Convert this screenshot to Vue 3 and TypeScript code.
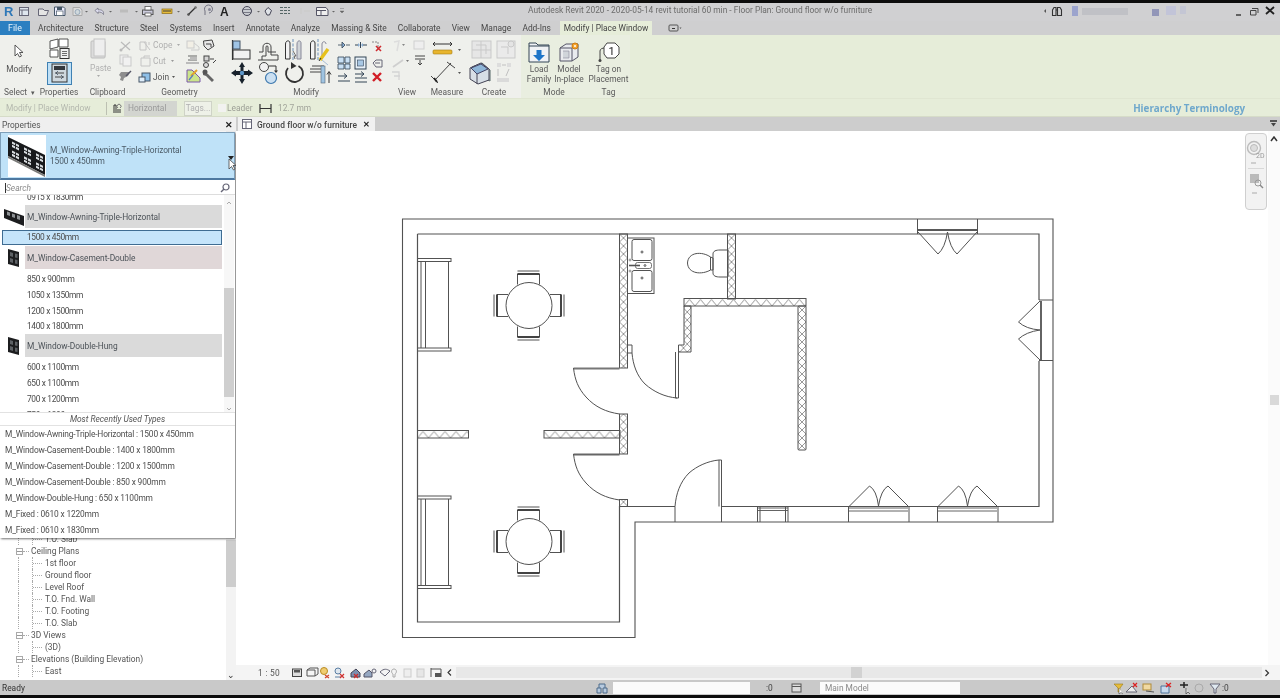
<script setup lang="ts">
interface TypeRow { kind: 'row' | 'group' | 'sel'; text: string; thumb?: string; tone?: string }

const tabs: string[] = ['Architecture', 'Structure', 'Steel', 'Systems', 'Insert', 'Annotate', 'Analyze', 'Massing & Site', 'Collaborate', 'View', 'Manage', 'Add-Ins']

const typeRows: TypeRow[] = [
  { kind: 'row', text: '0915 x 1830mm' },
  { kind: 'group', text: 'M_Window-Awning-Triple-Horizontal', thumb: 'wide' },
  { kind: 'sel', text: '1500 x 450mm' },
  { kind: 'group', text: 'M_Window-Casement-Double', thumb: 'tall', tone: 'pink' },
  { kind: 'row', text: '850 x 900mm' },
  { kind: 'row', text: '1050 x 1350mm' },
  { kind: 'row', text: '1200 x 1500mm' },
  { kind: 'row', text: '1400 x 1800mm' },
  { kind: 'group', text: 'M_Window-Double-Hung', thumb: 'tall' },
  { kind: 'row', text: '600 x 1100mm' },
  { kind: 'row', text: '650 x 1100mm' },
  { kind: 'row', text: '700 x 1200mm' },
  { kind: 'row', text: '750 x 1300mm' },
]

const recent: string[] = [
  'M_Window-Awning-Triple-Horizontal : 1500 x 450mm',
  'M_Window-Casement-Double : 1400 x 1800mm',
  'M_Window-Casement-Double : 1200 x 1500mm',
  'M_Window-Casement-Double : 850 x 900mm',
  'M_Window-Double-Hung : 650 x 1100mm',
  'M_Fixed : 0610 x 1220mm',
  'M_Fixed : 0610 x 1830mm',
]

const tree: { text: string; group: boolean }[] = [
  { text: 'Ceiling Plans', group: true },
  { text: '1st floor', group: false },
  { text: 'Ground floor', group: false },
  { text: 'Level Roof', group: false },
  { text: 'T.O. Fnd. Wall', group: false },
  { text: 'T.O. Footing', group: false },
  { text: 'T.O. Slab', group: false },
  { text: '3D Views', group: true },
  { text: '(3D)', group: false },
  { text: 'Elevations (Building Elevation)', group: true },
  { text: 'East', group: false },
]

const tableRows: number[] = [305.5, 541.5]
const sideWindows: number[] = [258, 495.5]
const bottomWindows: number[] = [0, 89]
const panes: number[][] = [[1, 1], [13, 1], [25, 1], [1, 10], [13, 10], [25, 10]]
</script>

<template>
  <div class="app">
    <div class="blackbar"></div>

    <header class="titlebar">
      <svg class="qat" viewBox="0 3 350 18" width="350" height="18">
        <text x="4" y="16" class="rlogo">R</text>
        <rect x="19.5" y="7.5" width="9" height="8" fill="#dfe6ee" stroke="#667"/><path d="M19.5 10H28.5M22 10V15.5" stroke="#667" fill="none"/>
        <path d="M38.5 9H43L44.5 10.5H48.5L46.5 15.5H38.5Z" fill="#e4e4e4" stroke="#667"/>
        <path d="M54.5 7H63.5L65 8.500V15.500H54.500Z" fill="#eef" stroke="#456"/><rect x="57" y="7" width="5" height="3" fill="#456"/><rect x="56.500" y="11" width="6.500" height="4.500" fill="#fff" stroke="#456" stroke-width=".7"/>
        <path d="M73 7.500H80L82 10V15.500H73Z" fill="#ddd" stroke="#aaa"/><circle cx="77.500" cy="12" r="2.500" fill="#cfd8dc" stroke="#9ab"/>
        <path d="M85 11H88L86.500 12.500Z" fill="#666"/>
        <path d="M95 10.500L98 8V9.800C102 9.500 104 11 103.500 14.500C102.500 12.500 100.500 12 98 12V13.500Z" fill="#dde" stroke="#667" stroke-width=".7"/>
        <path d="M109 11H112L110.500 12.500Z" fill="#666"/>
        <path d="M120 11H128" stroke="#bcbcbc" stroke-width="3"/><path d="M135 11H138L136.500 12.500Z" fill="#666"/>
        <rect x="142.500" y="10" width="10.500" height="4.500" fill="#ccd" stroke="#555"/><rect x="145" y="6.500" width="6" height="3.500" fill="#fff" stroke="#555" stroke-width=".8"/><rect x="145" y="13" width="6" height="3" fill="#fff" stroke="#555" stroke-width=".8"/>
        <rect x="162" y="9" width="10" height="4.500" fill="#e8bd3a" stroke="#8a6a12" stroke-width=".7"/><path d="M163 11H171" stroke="#3b3b3b"/>
        <path d="M177 11H180L178.500 12.500Z" fill="#666"/>
        <path d="M188 15L196 7" stroke="#333" stroke-width="1.200"/><circle cx="188.500" cy="14.500" r="1.300" fill="#555"/><circle cx="195.500" cy="7.500" r="1.300" fill="#777"/>
        <path d="M205 15V11M205 11A4 4 0 1 1 209 13" fill="none" stroke="#667" stroke-width=".9"/><circle cx="209.500" cy="9.500" r="1.500" fill="#889"/>
        <text x="220" y="15.500" class="qa">A</text>
        <circle cx="247" cy="11" r="4.500" fill="#c9ccd1" stroke="#445"/><path d="M243 9.500H251M243 12.500H251" stroke="#445" stroke-width=".6"/>
        <path d="M257 11H260L258.500 12.500Z" fill="#666"/>
        <path d="M265 11L268 7.500L271.500 10.500L269.500 15H267Z" fill="#dfe3e8" stroke="#445"/>
        <path d="M280 7.500H290M280 10.500H290M280 13.500H290" stroke="#566" stroke-width="1.200" stroke-dasharray="3 1"/>
        <path d="M301 8V14M304 11H310" stroke="#ccc" stroke-width="1.600"/>
        <path d="M316.500 7.500H326L328 10V15.500H316.500Z" fill="#eee" stroke="#556"/><path d="M316.500 10.500H326M321 10.500V15.500" stroke="#556"/>
        <path d="M332 11H335L333.500 12.500Z" fill="#666"/>
        <path d="M340 8.500H344M340 11H344L342 13Z" fill="#666" stroke="#666" stroke-width=".4"/>
      </svg>
      <div class="title">Autodesk Revit 2020 - 2020-05-14 revit tutorial 60 min - Floor Plan: Ground floor w/o furniture</div>
      <div class="title-right">
        <svg viewBox="1040 3 150 18" width="150" height="18">
          <path d="M1046 9V13L1044 11Z" fill="#555"/>
          <path d="M1052.500 15.500V10L1054 7.500H1056V15.500ZM1057.500 15.500V7.500H1060L1061.500 10V15.500Z" fill="none" stroke="#333" stroke-width="1.100"/><path d="M1056 10H1057.500" stroke="#333"/>
          <rect x="1072" y="6" width="6" height="10" fill="#8f98cc" opacity=".8"/>
          <rect x="1082" y="8" width="46" height="7" fill="#c0c1c6"/>
          <rect x="1152" y="9" width="7" height="7" fill="#9296b8"/>
          <rect x="1166" y="6" width="10" height="9" fill="#c2c4d8"/>
          <rect x="1180" y="6" width="6" height="8" fill="#c4c6d4"/>
        </svg>
        <div class="win-btns">
          <svg viewBox="0 0 47 12" width="47" height="12">
            <path d="M3 10H8" stroke="#333" stroke-width="1.400"/>
            <path d="M19 3.500H25V8M17.500 5.500H23V10H17.500Z" fill="none" stroke="#444" stroke-width="1"/>
            <path d="M33 2L41 9M41 2L33 9" stroke="#222" stroke-width="1.800"/>
          </svg>
        </div>
      </div>
    </header>

    <nav class="tabs">
      <div class="file-tab">File</div>
      <div v-for="t in tabs" :key="t" class="tab">{{ t }}</div>
      <div class="tab active">Modify | Place Window</div>
      <svg class="tab-extra" viewBox="0 0 14 8" width="14" height="8">
        <rect x="1" y="1" width="9" height="6" rx="1" fill="none" stroke="#555"/><path d="M4 4.500H7" stroke="#333"/><path d="M11.500 3.500H13.500L12.500 5Z" fill="#555"/>
      </svg>
    </nav>

    <section class="ribbon">
      <div class="panel" style="width:38px">
        <div class="panel-body col-center">
          <svg viewBox="0 0 16 14" width="16" height="14" class="sel-cursor"><path d="M4 1V12L6.500 9.500L8.500 13L10.500 12L8.500 8.500H12Z" fill="#fff" stroke="#444" stroke-width=".9"/></svg>
          <span class="tool-label lift">Modify</span>
        </div>
        <div class="panel-title left">Select <span class="caret">▾</span></div>
      </div>

      <div class="panel" style="width:46px">
        <div class="panel-body">
          <svg viewBox="38 35 46 50" width="46" height="50">
            <path d="M50 41L58 39V47L50 49ZM59 39H68V47H59ZM50 50H58V57H50Z" fill="#fff" stroke="#444" stroke-width=".9"/>
            <rect x="60" y="48.500" width="9" height="10" fill="#f0f0f0" stroke="#333"/><path d="M62 51.500H67M62 53.500H67M62 55.500H67" stroke="#333" stroke-width=".7"/>
            <rect x="47.500" y="62.500" width="24" height="22" fill="#bfe0f6" stroke="#3f81b3"/>
            <rect x="52" y="64" width="15" height="18" fill="#cfd8de" stroke="#333"/><rect x="54" y="66" width="11" height="4" fill="#33383d"/>
            <path d="M55 73H64M55 77H64" stroke="#444"/><path d="M58 71L56 73L58 75M61 75L63 77L61 79" stroke="#345" fill="none" stroke-width=".7"/>
          </svg>
        </div>
        <div class="panel-title nudge-l">Properties</div>
      </div>

      <div class="panel" style="width:53px">
        <div class="panel-body">
          <svg viewBox="84 35 53 50" width="53" height="50">
            <rect x="91" y="41" width="14" height="17" rx="1" fill="#dcdcdc" stroke="#bdbdbd"/><rect x="94" y="39" width="11" height="17" fill="#eee" stroke="#c4c4c4"/>
            <text x="90" y="71" class="rt grey">Paste</text><path d="M97 75H100L98.500 77Z" fill="#aaa"/>
            <path d="M121 42L130 50M130 42L121 50" stroke="#bbb" stroke-width="1.200"/><circle cx="121" cy="50" r="1.500" fill="#bbb"/>
            <rect x="120" y="55" width="8" height="9" fill="#eee" stroke="#c9c9c9"/><rect x="123" y="57" width="8" height="9" fill="#f1f1f1" stroke="#c9c9c9"/>
            <path d="M121 72H130L128 76L124 78L123 81L120 80L121 77L119 75Z" fill="#8e8e8e"/><path d="M131 71L126 76" stroke="#556" stroke-width="1.400"/>
          </svg>
        </div>
        <div class="panel-title nudge-l2">Clipboard</div>
      </div>

      <div class="panel" style="width:85px">
        <div class="panel-body">
          <svg viewBox="137 35 85 50" width="85" height="50">
            <path d="M140 42H146V50H140ZM144 42L150 50M149 42V45" fill="none" stroke="#c4c4c4"/>
            <text x="153" y="48" class="rt grey">Cope</text><path d="M177 44H180L178.500 46Z" fill="#aaa"/>
            <path d="M141 58H150V66H141ZM144 58V56H150" fill="none" stroke="#c4c4c4"/>
            <text x="153" y="64" class="rt grey">Cut</text><path d="M171 60H174L172.500 62Z" fill="#999"/>
            <rect x="142" y="73" width="8" height="8" fill="#8ec0e8" stroke="#456"/><rect x="139" y="77" width="6" height="5" fill="#dfeefa" stroke="#456"/>
            <text x="153" y="80" class="rt">Join</text><path d="M172 76H175L173.500 78Z" fill="#555"/>
            <rect x="187" y="41" width="7" height="7" fill="#f2efe6" stroke="#ccc"/><path d="M194 43L199 47V50L191 50" fill="none" stroke="#ccc"/>
            <path d="M203.500 41L212 40L214 46L208 50L204 46Z" fill="#e8e8e8" stroke="#444"/><path d="M206 44L211 44V47" stroke="#444" fill="none"/>
            <path d="M188 56H197M188 60H197" stroke="#666" stroke-width="1.200"/><rect x="190" y="57" width="7" height="3" fill="#bbb"/><rect x="186" y="62" width="13" height="2" fill="#bbb"/>
            <rect x="204" y="56" width="5" height="5" fill="#d5d5d5" stroke="#444"/><circle cx="206" cy="65" r="2.500" fill="#ddd" stroke="#444"/><path d="M210 59H214M213 63L216 60" stroke="#444"/>
            <path d="M187 70V82H200V78L192 70Z" fill="#cbe58c" stroke="#7b58a8"/><path d="M191 76L197 70" stroke="#e2a22a" stroke-width="2"/><path d="M189 80L193 75" stroke="#5c7bc0" stroke-width="1.300"/>
            <path d="M203 71L208 74L214 80L212 82L206 76L203 75Z" fill="#666"/><circle cx="205" cy="72" r="2.500" fill="#555"/>
          </svg>
        </div>
        <div class="panel-title">Geometry</div>
      </div>

      <div class="panel" style="width:168px">
        <div class="panel-body">
          <svg viewBox="222 35 168 50" width="168" height="50">
            <path d="M232.500 40V60" stroke="#333" stroke-width="1.200"/><rect x="233" y="41" width="7" height="8" fill="#9fc4e6" stroke="#456"/><rect x="233" y="50" width="17" height="9" fill="#f1f1f1" stroke="#333"/>
            <path d="M258 60H278V55H271V47C271 42 263 42 263 47V52H259M262 60V56H266V47C266 45.500 268 45.500 268 47V52H276" fill="none" stroke="#444"/>
            <path d="M285.500 59V44C285.500 40 290 40 290 43V59Z" fill="#f2f2f2" stroke="#333"/><path d="M293 39V61" stroke="#6a8fb8" stroke-dasharray="3 1.500"/><path d="M297 59V44C297 40 301 40 301 43V59Z" fill="#d0d4d8" stroke="#889"/><path d="M293 51L296 56L294 56L295 59" fill="#fff" stroke="#333" stroke-width=".7"/>
            <path d="M310.500 59V44C310.500 40 315 40 315 43V59Z" fill="#f2f2f2" stroke="#333"/><path d="M318 39V60" stroke="#6a8fb8" stroke-dasharray="3 1.500"/><path d="M322 59V44C322 41 326 41 326 44" fill="none" stroke="#889"/><path d="M320 60L328 49" stroke="#e6c11c" stroke-width="3.400"/><path d="M319 61L321 58" stroke="#333"/>
            <path d="M338 45H342M346 45H350M342 42L345 45L342 48Z" fill="#8ab0d8" stroke="#345" stroke-width=".8"/>
            <path d="M355 45H358.500M362.500 45H367M360.500 42V48" fill="none" stroke="#345"/><path d="M358 43L360 45L358 47ZM363 43L361 45L363 47Z" fill="#8ab0d8"/>
            <path d="M372 42H378V49" fill="none" stroke="#888" stroke-dasharray="2 1"/><path d="M376 46L381 51M381 46L376 51" stroke="#d02b30" stroke-width="1.600"/>
            <path d="M338 57H344V63H338ZM345 57H350V63H345ZM338 64H344V69H338ZM345 64H350V69H345Z" fill="#c9e0f4" stroke="#345" stroke-width=".8"/>
            <rect x="355" y="57" width="11" height="12" fill="#e6f0f8" stroke="#345"/><rect x="357.500" y="60" width="6" height="6" fill="#a8c8e4" stroke="#345" stroke-width=".6"/>
            <path d="M373 63L376 60H382V67H376Z" fill="none" stroke="#667"/><path d="M375 63H380" stroke="#667"/>
            <path d="M338 76H347M344 73.500L347 76L344 78.500M338 81H350" fill="none" stroke="#345"/>
            <path d="M355 74H364M361 71.500L364 74L361 76.500M355 78H367M355 82H367" fill="none" stroke="#345"/>
            <path d="M373 73L381 81M381 73L373 81" stroke="#d21e26" stroke-width="2.400"/>
            <path d="M242 62L245 67H243.500V71H248V69.500L253 73L248 76.500V75H243.500V79H245L242 84L239 79H240.500V75H236V76.500L231 73L236 69.500V71H240.500V67H239Z" fill="#18222c"/><circle cx="242" cy="73" r="2.200" fill="#5d97c9"/>
            <circle cx="264" cy="67" r="4.500" fill="#f1f1f1" stroke="#444"/><circle cx="271" cy="78" r="5.500" fill="#cbe0f2" stroke="#3d78ae" stroke-width="1.200"/><path d="M269 66H276V72" fill="none" stroke="#333"/><path d="M274 70.500L276 73L278 70.500Z" fill="#333"/>
            <path d="M298.500 66A8.500 8.500 0 1 1 288 68" fill="none" stroke="#333" stroke-width="1.800"/><path d="M291 62L296.500 66L291 69Z" fill="#333"/>
            <path d="M310 69H325M310 72H322M312 66H324" stroke="#444"/><path d="M322 60L328 65" stroke="#a5bcd4"/><rect x="321" y="66" width="4" height="17" fill="#9fc4e2" stroke="#567" stroke-width=".6"/><path d="M329 83V72M327 74.500L329 71.500L331 74.500" fill="none" stroke="#333"/>
          </svg>
        </div>
        <div class="panel-title">Modify</div>
      </div>

      <div class="panel" style="width:37px">
        <div class="panel-body">
          <svg viewBox="390 35 37 50" width="37" height="50">
            <path d="M394 42L399 41L397 51" fill="none" stroke="#ddd" stroke-width="1.500"/><path d="M402 44H405L403.500 46Z" fill="#888"/>
            <rect x="414" y="41" width="10" height="8" fill="#eee" stroke="#d0d0d0"/>
            <path d="M393 67L403 60" stroke="#cfcfcf" stroke-width="1.800"/><path d="M406 60H409L407.500 62Z" fill="#777"/>
            <path d="M415 56H425M415 59H425" stroke="#444"/><path d="M420 60V65M418 63L420 65L422 63" fill="none" stroke="#444"/>
            <path d="M392 72L399 72V80M394 76H400" stroke="#d4d4d4" fill="none" stroke-width="1.300"/>
          </svg>
        </div>
        <div class="panel-title nudge-l3">View</div>
      </div>

      <div class="panel" style="width:40px">
        <div class="panel-body">
          <svg viewBox="427 35 40 50" width="40" height="50">
            <path d="M433 44H452M435 42L433 44L435 46M450 42L452 44L450 46" stroke="#333" fill="none"/><rect x="433" y="50" width="19" height="4" rx="1" fill="#e8b52e" stroke="#a67e13" stroke-width=".6"/>
            <path d="M458 49H461L459.500 51Z" fill="#555"/>
            <path d="M435 80L451 63" stroke="#444"/><path d="M431 76L438 83M447 62L455 68" stroke="#444"/><path d="M434 78L437 82" stroke="#222" stroke-width="2"/>
            <path d="M458 72H461L459.500 74Z" fill="#555"/>
          </svg>
        </div>
        <div class="panel-title">Measure</div>
      </div>

      <div class="panel" style="width:54px">
        <div class="panel-body">
          <svg viewBox="467 35 54 50" width="54" height="50">
            <rect x="472" y="41" width="19" height="17" fill="#e6e6e6" stroke="#c9c9c9"/><path d="M481 41V58M472 50H491M476 45H486V54" fill="none" stroke="#c9c9c9"/>
            <rect x="497" y="41" width="18" height="17" fill="#eaeaea" stroke="#c9c9c9"/><circle cx="511" cy="44" r="3" fill="#e4e4e4" stroke="#c9c9c9"/><path d="M501 47H508V54" fill="none" stroke="#c9c9c9"/>
            <path d="M472 67L482 63L490 70V81L482 77L472 71Z" fill="#e8e8e8" stroke="#566"/>
            <path d="M470 68L481 63L489 69V80L478 84L470 79Z" fill="#d8dfe6" stroke="#445"/>
            <path d="M471 68L481 64L488 69L477 74Z" fill="#8fb6d8" stroke="#446"/>
            <path d="M477 74V84" stroke="#445"/>
            <rect x="497" y="63" width="4" height="4" fill="#ddd"/><rect x="507" y="63" width="4" height="4" fill="#ddd"/><path d="M502 65H506M498 69V76M509 69L506 76" stroke="#c0c0c0"/><rect x="497" y="78" width="12" height="4" fill="#dadada"/>
          </svg>
        </div>
        <div class="panel-title">Create</div>
      </div>

      <div class="panel light" style="width:66px">
        <div class="panel-body tool-row">
          <div class="big-tool">
            <svg viewBox="0 0 22 22" width="22" height="22">
              <path d="M1 2H8L10 4H21V21H1Z" fill="#f0f2f5" stroke="#345" stroke-width="1"/><path d="M1 5H21" stroke="#345" stroke-width="1"/>
              <path d="M8.500 9H13.500V14H17L11 20L5 14H8.500Z" fill="#1d74c8"/>
            </svg>
            <span>Load<br>Family</span>
          </div>
          <div class="big-tool">
            <svg viewBox="0 0 22 22" width="22" height="22">
              <path d="M2 7L8 3H20L20 16L14 20H2Z" fill="#e9ebee" stroke="#556"/><path d="M2 7H14V20M14 7L20 3" stroke="#556" fill="none"/><path d="M5 10H11V17H5" fill="#d0d5da" stroke="#889" stroke-width=".6"/>
              <circle cx="17" cy="5" r="3" fill="#f3a532" stroke="#d17d10"/><circle cx="17" cy="5" r="1" fill="#fff"/>
            </svg>
            <span>Model<br>In-place</span>
          </div>
        </div>
        <div class="panel-title">Mode</div>
      </div>

      <div class="panel light" style="width:43px">
        <div class="panel-body tool-row">
          <div class="big-tool">
            <svg viewBox="0 0 24 22" width="24" height="22">
              <path d="M3 19V10C3 8 5 7 8 7" fill="none" stroke="#444"/><circle cx="3" cy="19.500" r="1.500" fill="#444"/>
              <path d="M10 2H18L22 6V13L18 17H10L7 13V6Z" fill="#fff" stroke="#444"/><text x="14.500" y="13.500" class="tagnum">1</text>
            </svg>
            <span>Tag on<br>Placement</span>
          </div>
        </div>
        <div class="panel-title">Tag</div>
      </div>
      <div class="ribbon-fill"></div>
    </section>

    <section class="options">
      <span class="opt-mode">Modify | Place Window</span>
      <span class="opt-sep"></span>
      <svg viewBox="0 0 10 10" width="10" height="10" class="opt-ico"><path d="M1 9H9M1 7H9" stroke="#333"/><path d="M2 6L2 2H4V6" fill="none" stroke="#333"/><path d="M6 5A2 2 0 1 1 8 5" fill="none" stroke="#777"/></svg>
      <span class="opt-select">Horizontal</span>
      <span class="opt-btn">Tags...</span>
      <span class="opt-check"></span>
      <span class="opt-leader">Leader</span>
      <svg viewBox="0 0 13 9" width="13" height="9" class="opt-dim"><path d="M1 0V9M12 0V9M1 4.500H12" stroke="#333" stroke-width="1.200"/></svg>
      <span class="opt-value">12.7 mm</span>
      <span class="hierarchy">Hierarchy Terminology</span>
    </section>

    <main class="workspace">
      <aside class="side">
        <div class="side-head"><span>Properties</span><span class="close">✕</span></div>
        <div class="side-main">
          <div class="tree">
            <div class="tree-rows">
              <div class="tree-row"><span class="g1"></span><span class="g2"></span><span class="dash"></span>T.O. Slab</div>
              <div v-for="r in tree" :key="r.text" class="tree-row">
                <template v-if="r.group">
                  <span class="box"></span><span class="dash short"></span>{{ r.text }}
                </template>
                <template v-else>
                  <span class="g1"></span><span class="g2"></span><span class="dash"></span>{{ r.text }}
                </template>
              </div>
            </div>
            <div class="tree-scroll"><div class="tree-thumb"></div><span class="tree-arrow">⌄</span></div>
          </div>

          <div class="dropdown">
            <div class="selector">
              <div class="sel-thumb">
                <svg viewBox="0 0 38 42" width="38" height="42">
                  <path d="M0 2L37 20V40L0 21Z" fill="#18191b"/>
                  <path d="M0 21L37 40V42L0 23Z" fill="#7a7a78"/>
                  <g transform="matrix(1 .49 0 1 3 5)">
                    <rect v-for="(p, i) in panes" :key="i" :x="p[0]" :y="p[1]" width="7" height="5.500" fill="#d9dde0"/>
                    <path d="M4.500 1V6.500M16.500 1V6.500M28.500 1V6.500M1 3.800H32M4.500 10V15.500M16.500 10V15.500M28.500 10V15.500M1 12.800H32" stroke="#18191b" stroke-width=".9"/>
                  </g>
                </svg>
              </div>
              <div class="sel-text">M_Window-Awning-Triple-Horizontal<br>1500 x 450mm</div>
              <svg class="sel-arrow" viewBox="0 0 10 16" width="10" height="16"><path d="M1 1H7L4 5Z" fill="#222"/><path d="M2 4V14L4.500 11.500L6.500 15L8 14L6 10.500H9Z" fill="#fff" stroke="#444" stroke-width=".8"/></svg>
            </div>
            <div class="search">
              <span class="search-text">Search</span>
              <svg viewBox="0 0 10 10" width="10" height="10"><circle cx="6" cy="4" r="3" fill="none" stroke="#667" stroke-width="1.200"/><path d="M4 6L1 9" stroke="#667" stroke-width="1.500"/></svg>
            </div>
            <div class="list-wrap">
              <div class="list">
                <div class="list-inner">
                  <template v-for="r in typeRows" :key="r.text">
                    <div v-if="r.kind === 'group'" class="group-row">
                      <div class="thumb">
                        <svg v-if="r.thumb === 'wide'" viewBox="0 0 20 20" width="20" height="20">
                          <path d="M0 3L20 10V20L0 12Z" fill="#1c1d1f"/>
                          <path d="M3 5.500L6 6.500V10L3 9ZM8 7.500L11 8.500V12L8 11ZM13 9L16 10V14L13 13Z" fill="#8d9194"/>
                        </svg>
                        <svg v-else viewBox="0 0 20 20" width="20" height="20">
                          <path d="M4 2L15 5V20L4 17Z" fill="#1c1d1f"/>
                          <path d="M6 5L9 6V10L6 9ZM11 6.500L13.500 7V11L11 10.500ZM6 11L9 12V16L6 15ZM11 12.500L13.500 13V17L11 16.500Z" fill="#5e6266"/>
                        </svg>
                      </div>
                      <div class="group-label" :class="r.tone">{{ r.text }}</div>
                    </div>
                    <div v-else class="type-row" :class="{ selected: r.kind === 'sel' }">{{ r.text }}</div>
                  </template>
                </div>
              </div>
              <div class="list-scroll">
                <svg class="list-up" viewBox="0 0 10 93" width="10" height="93"><path d="M3 9L5 7L7 9" fill="none" stroke="#aaa"/></svg>
                <div class="list-thumb"></div>
                <svg class="list-down" viewBox="0 0 10 15" width="10" height="15"><path d="M3 11L5 13L7 11" fill="none" stroke="#aaa"/></svg>
              </div>
            </div>
            <div class="mru-head">Most Recently Used Types</div>
            <div class="mru">
              <div v-for="m in recent" :key="m" class="mru-row">{{ m }}</div>
            </div>
          </div>
        </div>
      </aside>

      <div class="view">
        <div class="doc-bar">
          <div class="doc-tab">
            <svg viewBox="0 0 10 10" width="10" height="10"><rect x=".5" y=".5" width="9" height="9" fill="#fff" stroke="#667"/><path d="M.5 3H9.500M4 3V9.500" stroke="#667"/></svg>
            <span class="doc-name">Ground floor w/o furniture</span>
            <span class="doc-close">✕</span>
          </div>
          <svg class="doc-more" viewBox="0 0 8 8" width="8" height="8"><rect x="0" y="0" width="7" height="2" fill="#555"/><path d="M1 3H6L3.500 6.500Z" fill="#444"/></svg>
        </div>

        <div class="canvas">
          <svg class="plan" viewBox="236 131 1032 534" width="1032" height="534">
            <defs>
              <pattern id="xh" patternUnits="userSpaceOnUse" x="619.500" y="234" width="8" height="8">
                <path d="M0 0L8 8M8 0L0 8" stroke="#6f6f6f" stroke-width=".7"/>
              </pattern>
              <pattern id="xh2" patternUnits="userSpaceOnUse" x="798" y="306" width="8" height="8">
                <path d="M0 0L8 8M8 0L0 8" stroke="#6f6f6f" stroke-width=".7"/>
              </pattern>
              <pattern id="xh3" patternUnits="userSpaceOnUse" x="727.500" y="234" width="8" height="8">
                <path d="M0 0L8 8M8 0L0 8" stroke="#6f6f6f" stroke-width=".7"/>
              </pattern>
              <pattern id="xh4" patternUnits="userSpaceOnUse" x="683.500" y="300" width="7.500" height="8">
                <path d="M0 0L7.500 8M7.500 0L0 8" stroke="#6f6f6f" stroke-width=".7"/>
              </pattern>
              <pattern id="zig" patternUnits="userSpaceOnUse" x="417.500" y="430.500" width="11" height="7.500">
                <path d="M0 7.500L5.500 1L11 7.500" fill="none" stroke="#6f6f6f" stroke-width=".7"/>
              </pattern>
              <pattern id="zig2" patternUnits="userSpaceOnUse" x="684" y="298.500" width="11" height="7.500">
                <path d="M0 7.500L5.500 1L11 7.500" fill="none" stroke="#6f6f6f" stroke-width=".7"/>
              </pattern>
            </defs>

            <g fill="none" stroke="#525252" stroke-width="1">
              <path d="M402.500 219H1053V522H635V637.500H402.500Z" stroke-width="1.100"/>
              <path d="M417.500 234H1039V300M1039 361V506.500H721.500M675 506.500H619.500V622H417.500V234" stroke-width="1.200"/>

              <rect x="619.500" y="234" width="8" height="134" fill="url(#xh)"/>
              <path d="M627.500 345H632V353H627.500Z" fill="#fff"/>
              <rect x="727.500" y="234" width="8" height="65" fill="url(#xh3)"/>
              <rect x="684" y="298.500" width="122" height="7.500" fill="url(#zig2)"/>
              <path d="M684 306V345H678.500V352H691V306Z" fill="url(#xh4)"/>
              <rect x="798" y="306" width="8" height="144" rx="1" fill="url(#xh2)"/>
              <rect x="417.500" y="430.500" width="51" height="7.500" fill="url(#zig)"/>
              <rect x="544" y="430.500" width="76" height="7.500" fill="url(#zig)"/>
              <rect x="619.500" y="414" width="8" height="40" fill="url(#xh)"/>
              <rect x="619.500" y="499.500" width="8" height="7" fill="url(#xh)"/>

              <path d="M573.500 368.500H619.500" stroke-width="2" stroke="#777"/>
              <path d="M573.500 368C575 380 578 388 586 397C595 407 606 412 619.500 414"/>
              <path d="M573.500 454.500H619.500" stroke-width="2" stroke="#666"/>
              <path d="M573.500 454C575 466 578 474 586 483C595 493 606 498 619.500 500"/>
              <path d="M675.500 352V398M678.500 352V398M675.500 398H678.500"/>
              <path d="M677 398C665 397 654 392 645 384C637 376 633 365 632 353"/>
              <path d="M719 460V506.500M721.500 460V522M719 460H721.500"/>
              <path d="M719 460C708 461 697 466 689 473C680 482 676 494 675 506.500V522"/>

              <rect x="627.500" y="238" width="26.500" height="55.500"/>
              <rect x="632" y="239.500" width="20" height="21" rx="2"/>
              <rect x="632" y="270.500" width="20" height="21" rx="2"/>
              <rect x="635.500" y="262.500" width="16" height="6" rx="2" stroke-width=".8"/>
              <path d="M629 265.500H640" stroke-width="1.600"/>
              <circle cx="642" cy="252" r="1"/><circle cx="642" cy="278" r="1"/><circle cx="645" cy="265.500" r=".9"/>
              <circle cx="630" cy="260" r="1" stroke-width=".6"/><circle cx="630" cy="271" r="1" stroke-width=".6"/>

              <path d="M710.500 257C702 251 688 252 687.500 263C688 274 702 275 710.500 270Z"/>
              <path d="M713 254C713 251 716 250 720 250H728V277H720C716 277 713 276 713 273Z"/>
              <path d="M710.500 257L713 258V270L710.500 270" />

              <path d="M917.500 219V234M977.500 219V234"/>
              <path d="M918 230H977" stroke-width="1.300" stroke="#222"/>
              <path d="M918 232L938 254Q945 248 947.500 232M977 232L957 254Q950 248 947.500 232"/>

              <path d="M1039 300H1053M1039 360.500H1053"/>
              <path d="M1041 301V360" stroke-width="1.400" stroke="#222"/>
              <path d="M1040 301L1018.500 322Q1026 329 1040 330M1040 360L1018.500 339Q1026 332 1040 330"/>

              <g v-for="dx in bottomWindows" :key="dx" :transform="`translate(${dx} 0)`">
                <path d="M848.500 506V522M909 506V522"/>
                <path d="M849 508H908M849 511H908" stroke-width=".9"/>
                <path d="M849.500 506L869.500 486Q876.500 490 878.500 506M908 506L888 486Q881 490 878.500 506"/>
              </g>

              <path d="M757.500 507V522M788 507V522M760 507V522M785.500 507V522" stroke-width="1"/>
              <path d="M758 508H788M758 510.500H788" stroke-width=".9"/>

              <g v-for="y in sideWindows" :key="y" :transform="`translate(0 ${y - 258})`">
                <rect x="417.500" y="258.500" width="33.500" height="3"/>
                <rect x="417.500" y="348" width="33.500" height="3"/>
                <path d="M421 261.500V348M425.500 261.500V348M448.500 261.500V348"/>
              </g>

              <g v-for="cy in tableRows" :key="cy" :transform="`translate(0 ${cy})`">
                <circle cx="529" cy="0" r="23" fill="#fff"/>
                <path d="M517.500 -21V-31.500H539.500V-21M517.500 21V31.500H539.500V21"/>
                <path d="M517.500 -31.500H539.500M517.500 31.500H539.500" stroke-width="1.500" stroke="#222"/>
                <path d="M517.500 -34.500H539.500M517.500 34.500H539.500"/>
                <path d="M508 -11H497V11H508M550 -11H561V11H550"/>
                <path d="M497 -11V11M561 -11V11" stroke-width="1.500" stroke="#222"/>
                <path d="M494 -11V11M564 -11V11"/>
              </g>
            </g>
          </svg>

          <div class="v-scroll">
            <svg viewBox="0 0 8 6" width="8" height="6"><path d="M1 5L4 1L7 5" fill="none" stroke="#333" stroke-width="1.500"/></svg>
            <div class="v-thumb"></div>
          </div>

          <div class="navbar">
            <span class="nav-corner"></span>
            <svg viewBox="0 0 20 26" width="20" height="26">
              <circle cx="8" cy="9" r="6.500" fill="none" stroke="#bbb" stroke-width="1.400"/><circle cx="8" cy="9" r="3.500" fill="#ddd" stroke="#bbb"/>
              <text x="10" y="19" class="navnum">2D</text>
              <path d="M5 24H10" stroke="#aaa"/>
            </svg>
            <span class="nav-sep"></span>
            <svg viewBox="0 0 20 22" width="20" height="22">
              <rect x="4" y="2" width="9" height="9" fill="#bbb"/><circle cx="12" cy="11" r="3" fill="none" stroke="#999"/><path d="M14 13L17 16" stroke="#888" stroke-width="1.400"/><path d="M6 21H11" stroke="#aaa"/>
            </svg>
          </div>
        </div>

        <div class="view-bar">
          <span class="scale">1 : 50</span>
          <svg viewBox="292 665 162 15" width="162" height="15" class="view-icons">
            <rect x="292.500" y="669" width="9" height="7.500" fill="#ddd" stroke="#444"/><rect x="294" y="670" width="6" height="2.500" fill="#555"/>
            <path d="M307 670H315V676H307ZM307 670L310 668H318V674L315 676" fill="none" stroke="#555"/>
            <circle cx="324" cy="671" r="3.500" fill="#f0cc70" stroke="#b98b22"/><path d="M325 675L329 678M329 675L325 678" stroke="#d2452a" stroke-width="1.200"/>
            <circle cx="338" cy="671" r="3" fill="#dfe7ef" stroke="#5a7ea3"/><path d="M335 677H341" stroke="#5a7ea3"/><path d="M340 674L344 678M344 674L340 678" stroke="#d03030" stroke-width="1.200"/>
            <path d="M351 673L356 669L360 673V677H351Z" fill="#7a8fb0" stroke="#445"/><path d="M354 674L358 678M358 674L354 678" stroke="#c92c2c" stroke-width="1.300"/>
            <path d="M364 674L369 670L372 673V677H364Z" fill="#96a8c2" stroke="#556"/><circle cx="374" cy="671" r="2" fill="none" stroke="#667"/>
            <path d="M380 672C384 668 387 669 390 671L385 676Z" fill="none" stroke="#667"/>
            <path d="M394 669C391 669 391 673 393 674V677H395V674C397 673 397 669 394 669Z" fill="none" stroke="#aaa"/>
            <rect x="404" y="669" width="7" height="8" fill="#eee" stroke="#ccc"/><rect x="417" y="669" width="7" height="8" fill="#e6e6e6" stroke="#ccc"/>
            <path d="M431 668V677M431 669H441V677" fill="none" stroke="#555"/><rect x="435" y="673" width="6" height="4" fill="#555"/>
            <path d="M451 669.500L448 672.500L451 675.500" fill="none" stroke="#333" stroke-width="1.100"/>
          </svg>
          <div class="h-track"><div class="h-thumb"></div></div>
          <svg viewBox="0 0 6 8" width="6" height="8" class="h-next"><path d="M1.500 1L4.500 4L1.500 7" fill="none" stroke="#333" stroke-width="1.200"/></svg>
        </div>
      </div>
    </main>

    <footer class="status">
      <span class="ready">Ready</span>
      <svg viewBox="0 0 12 12" width="12" height="12" class="st-ico"><path d="M1 11V6H5V11ZM7 11V6H11V11ZM3 6V2H9V6" fill="#b7cadf" stroke="#4d6a8a"/></svg>
      <div class="st-input one"></div>
      <span class="st-count">:0</span>
      <svg viewBox="0 0 12 10" width="12" height="10" class="st-ico2"><rect x="1" y="1" width="9" height="8" fill="#ddd" stroke="#555"/><path d="M1 3.500H10" stroke="#555"/></svg>
      <div class="st-input two"><span>Main Model</span></div>
      <svg viewBox="1116 680 112 15" width="112" height="15" class="st-tools">
        <path d="M1118 684H1127L1124 688V692H1122V688Z" fill="#e6bc3b" stroke="#9a7a17" stroke-width=".6"/><path d="M1123 688V694L1125 692.500L1127 694" fill="#fff" stroke="#444" stroke-width=".6"/>
        <path d="M1130 692L1136 686L1141 692Z" fill="#eee" stroke="#667"/><path d="M1137 683L1141 687M1141 683L1137 687" stroke="#d22" stroke-width="1.200"/>
        <rect x="1147" y="684" width="8" height="6" fill="#f0d9a2" stroke="#b08b3a"/><path d="M1150 691L1158 692" stroke="#555"/>
        <path d="M1165 686H1173V693H1165Z" fill="#c7d9ec" stroke="#4f739a"/><path d="M1170 683L1175 687M1175 683L1170 687" stroke="#d22" stroke-width="1.300"/>
        <path d="M1184 685H1192M1188 682V688" stroke="#222" stroke-width="1.500"/><path d="M1190 688V694L1192 692L1194 694" fill="#ddd" stroke="#444" stroke-width=".7"/>
        <path d="M1203 684A4 4 0 0 1 1203 692A4 4 0 0 1 1203 684" fill="#c9c9c9" stroke="#aaa"/>
        <path d="M1214 684H1224L1220 689V693H1218V689Z" fill="#dfe8f0" stroke="#667"/>
      </svg>
      <span class="st-zero">:0</span>
    </footer>
    <div class="blackbar bottom"></div>
  </div>
</template>

<style scoped>
.app {
  width: 1280px;
  height: 698px;
  overflow: hidden;
  display: flex;
  flex-direction: column;
  background: #fff;
  color: #4a4a4a;
  font-family: Roboto, "Liberation Sans", sans-serif;
  font-size: 8.4px;
  filter: blur(.4px);
}
.blackbar { height: 3px; flex: none; background: #0c0c0c; }
.titlebar { height: 18px; flex: none; display: flex; align-items: center; background: #d0d0d2; position: relative; }
.qat { flex: none; }
.rlogo { font: 700 13px "Liberation Sans", sans-serif; fill: #2f78b8; }
.qa { font: 700 12px "Liberation Sans", sans-serif; fill: #222; }
.title { margin-left: 178px; padding-bottom: 4px; width: 512px; flex: none; color: #6c6c6c; white-space: nowrap; font-size: 8.4px; }
.title-right { display: flex; align-items: center; flex: 1; }
.title-right svg { flex: none; }
.win-btns { margin-left: 43px; }

.tabs { height: 14px; flex: none; display: flex; align-items: center; background: #cfcfd0; }
.file-tab { width: 30px; height: 14px; background: #2b7fc1; color: #e9f3fb; display: flex; align-items: center; justify-content: center; margin-right: 8px; font-size: 8.8px; }
.tab { margin-right: 11.200px; white-space: nowrap; color: #474747; }
.tab.active { background: #e6edd9; height: 14px; width: 92px; box-sizing: border-box; justify-content: center; display: flex; align-items: center; margin: 0 16px 0 -2px; color: #444; }
.tab-extra { flex: none; }

.ribbon { height: 63px; flex: none; display: flex; background: #e6edd9; }
.ribbon-fill { flex: 1; }
.panel { flex: none; height: 63px; background: #eff0ec; display: flex; flex-direction: column; }
.panel.light { background: #e9eee0; }
.panel-body { height: 50px; flex: none; }
.panel-body svg { display: block; }
.panel-title { height: 13px; text-align: center; color: #5a5a5a; line-height: 14px; white-space: nowrap; }
.panel-title.left { text-align: left; padding-left: 4px; }
.nudge-l { padding-right: 4px; }
.nudge-l2 { padding-right: 6px; }
.nudge-l3 { padding-right: 3px; }
.caret { font-size: 7px; margin-left: 2px; }
.col-center { display: flex; flex-direction: column; align-items: center; padding-top: 9px; box-sizing: border-box; }
.sel-cursor { flex: none; margin-left: -1px; }
.tool-label { color: #555; }
.lift { margin-top: 6px; }
.tool-row { display: flex; justify-content: center; gap: 1px; padding-top: 6px; box-sizing: border-box; }
.big-tool { display: flex; flex-direction: column; align-items: center; text-align: center; line-height: 9.600px; color: #5a5a5a; white-space: nowrap; width: 29px; }
.big-tool span { margin-top: 2px; }
.rt { font: 8.400px Roboto, sans-serif; fill: #555; }
.rt.grey { fill: #b0b0b0; }
.tagnum { font: 11px Roboto, sans-serif; fill: #222; text-anchor: middle; }
.navnum { font: 7px Roboto, sans-serif; fill: #999; }

.options { height: 19px; flex: none; display: flex; align-items: center; padding-top: 1px; background: #e6edd9; border-top: 1px solid #e0e6d2; box-sizing: border-box; border-bottom: 1px solid #d6dcc8; }
.opt-mode { margin-left: 6px; width: 100px; color: #b4b8ae; white-space: nowrap; }
.opt-sep { width: 1px; height: 13px; background: #bcc0b2; }
.opt-ico { margin-left: 5px; flex: none; }
.opt-select { margin-left: 2px; width: 53px; height: 15px; padding-left: 4px; box-sizing: border-box; background: #d3d5d0; color: #9a9a9a; line-height: 15px; white-space: nowrap; }
.opt-btn { margin-left: 7px; width: 28px; height: 15px; box-sizing: border-box; border: 1px solid #cfd3c7; background: #eef1e8; color: #b0b0b0; text-align: center; line-height: 13px; }
.opt-check { margin-left: 6px; width: 8px; height: 8px; background: #f2f2f0; }
.opt-leader { margin-left: 1px; width: 32px; color: #9c9f96; }
.opt-dim { flex: none; }
.opt-value { margin-left: 6px; color: #a2a59b; white-space: nowrap; }
.hierarchy { margin-left: auto; margin-right: 35px; color: #6fa8cc; font: 700 9.800px "Open Sans", sans-serif; white-space: nowrap; }

.workspace { flex: 1; min-height: 0; display: flex; }
.side { width: 236px; flex: none; display: flex; flex-direction: column; background: #f6f6f6; }
.side-head { height: 14px; flex: none; display: flex; align-items: center; justify-content: space-between; background: #efefef; padding: 2px 3px 0 2px; box-sizing: border-box; color: #555; }
.close { font-size: 9px; color: #222; font-weight: 700; }
.side-main { flex: 1; position: relative; min-height: 0; }
.tree { height: 100%; display: flex; background: #fff; }
.tree-rows { width: 226px; flex: none; display: flex; flex-direction: column; justify-content: flex-end; color: #555; overflow: hidden; }
.tree-row { height: 12px; flex: none; display: flex; align-items: center; white-space: nowrap; position: relative; padding-left: 16px; }
.tree-row:last-child { margin-bottom: 3px; }
.g1 { width: 3px; height: 12px; border-right: 1px dotted #aaa; flex: none; box-sizing: border-box; }
.g2 { width: 14px; height: 12px; border-right: 1px dotted #aaa; flex: none; box-sizing: border-box; }
.dash { width: 9px; height: 0; border-top: 1px dotted #aaa; margin-right: 3px; flex: none; }
.dash.short { width: 6px; margin-right: 2px; }
.box { width: 7px; height: 7px; box-sizing: border-box; border: 1px solid #aaa; background: linear-gradient(#fff 2px, #999 2px, #999 3px, #fff 3px); flex: none; }
.tree-scroll { flex: 1; background: #f3f3f3; position: relative; display: flex; flex-direction: column; }
.tree-thumb { height: 47px; margin-top: 409px; background: #cdcdcd; }
.tree-arrow { margin-top: auto; text-align: center; font-size: 9px; color: #333; line-height: 10px; }

.dropdown { position: absolute; left: 0; top: 1px; width: 235px; height: 406px; display: flex; flex-direction: column; background: #fff; box-shadow: 1px 1px 2px rgba(0, 0, 0, .55); }
.selector { height: 48px; flex: none; box-sizing: border-box; display: flex; align-items: center; background: #bfe2f8; border: 1px solid #7e9fb9; border-bottom: 2px solid #4d78a0; padding-left: 7px; position: relative; }
.sel-thumb { width: 38px; height: 42px; background: #fff; flex: none; }
.sel-thumb svg { display: block; }
.sel-text { margin-left: 4px; color: #4c5c68; line-height: 11px; white-space: nowrap; letter-spacing: -.1px; }
.sel-arrow { position: absolute; right: -3px; top: 22px; }
.search { height: 14px; margin-top: 1px; flex: none; box-sizing: border-box; display: flex; align-items: center; justify-content: space-between; padding: 0 5px; background: #fff; border-bottom: 1px solid #ddd; color: #8a8a8a; }
.search-text { font-style: italic; border-left: 1px solid #333; }
.list-wrap { height: 217px; flex: none; display: flex; overflow: hidden; }
.list { width: 224px; flex: none; overflow: hidden; }
.list-inner { margin-top: -6.700px; padding-left: 2px; padding-right: 2px; }
.type-row { height: 15.700px; line-height: 15.700px; padding: 1.500px 0 0 25px; letter-spacing: -.35px; color: #4c4c4c; white-space: nowrap; box-sizing: border-box; }
.type-row.selected { background: #c5e4fa; border: 1px solid #3f6c92; line-height: 13.700px; padding: 0 0 0 24px; }
.group-row { height: 23px; margin: .5px 0 2px; display: flex; }
.thumb { width: 23px; flex: none; background: #fff; display: flex; align-items: center; justify-content: center; }
.group-label { flex: 1; background: #dadada; display: flex; align-items: center; padding: 1px 0 0 2px; letter-spacing: -.05px; color: #4c5258; white-space: nowrap; }
.group-label.pink { background: #e0d7d8; }
.list-scroll { flex: 1; display: flex; flex-direction: column; align-items: stretch; background: #f7f7f7; margin-right: 1px; }
.list-up { flex: none; display: block; }
.list-thumb { height: 109px; flex: none; background: #cfcfcf; }
.list-down { flex: none; display: block; }
.mru-head { height: 14px; flex: none; box-sizing: border-box; border-top: 1px solid #e2e2e2; border-bottom: 1px solid #e2e2e2; text-align: center; font-style: italic; line-height: 12px; color: #555; }
.mru { flex: 1; background: #fff; }
.mru-row { height: 16px; line-height: 16px; padding-left: 5px; letter-spacing: -.17px; color: #4f4f4f; white-space: nowrap; }

.view { flex: 1; min-width: 0; display: flex; flex-direction: column; }
.doc-bar { height: 14px; flex: none; display: flex; align-items: center; background: #cdcdcd; }
.doc-tab { margin-left: 2px; width: 137px; height: 14px; background: #f1f1f1; display: flex; align-items: center; padding-left: 4px; box-sizing: border-box; }
.doc-tab svg { flex: none; }
.doc-name { margin-left: 5px; padding-top: 1px; width: 106px; font-weight: 500; letter-spacing: .1px; color: #444; white-space: nowrap; }
.doc-close { font-size: 8px; color: #222; font-weight: 700; }
.doc-more { margin-left: auto; margin-right: 2px; flex: none; }
.canvas { flex: 1; min-height: 0; display: flex; position: relative; background: #fff; }
.plan { flex: none; display: block; }
.v-scroll { flex: 1; display: flex; flex-direction: column; align-items: center; padding-top: 5px; background: #fbfbfb; }
.v-thumb { margin-top: 253px; width: 9px; height: 10px; background: #d9d9d9; }
.navbar { position: absolute; left: 1009px; top: 2px; width: 22px; height: 77px; box-sizing: border-box; border: 1px solid #cfcfcf; border-radius: 4px; background: #f2f2f2; display: flex; flex-direction: column; align-items: center; }
.nav-corner { height: 5px; flex: none; }
.nav-sep { width: 16px; height: 1px; background: #d8d8d8; margin: 3px 0; flex: none; }

.view-bar { height: 15px; flex: none; display: flex; align-items: center; background: #f4f4f4; }
.scale { margin-left: 22px; width: 34px; color: #555; letter-spacing: .3px; flex: none; }
.view-icons { flex: none; }
.h-track { margin-left: 2px; width: 806px; height: 11px; background: #e8e8e8; flex: none; }
.h-thumb { margin-left: 395px; width: 11px; height: 11px; background: #d2d2d2; }
.h-next { margin-left: 2px; flex: none; }

.status { height: 15px; flex: none; display: flex; align-items: center; background: #c9c9c9; }
.ready { margin-left: 2px; width: 594px; color: #333; flex: none; }
.st-ico { flex: none; }
.st-input { height: 12px; background: #fbfbfb; flex: none; }
.st-input.one { margin-left: 5px; width: 137px; }
.st-count { margin-left: 16px; width: 25px; color: #444; flex: none; }
.st-ico2 { flex: none; }
.st-input.two { margin-left: 17px; width: 140px; color: #8a8a8a; padding-left: 5px; box-sizing: border-box; line-height: 12px; }
.st-tools { margin-left: 152px; flex: none; }
.st-zero { margin-left: -2px; color: #444; }
</style>

<style>
body { margin: 0; background: #fff; }
</style>
